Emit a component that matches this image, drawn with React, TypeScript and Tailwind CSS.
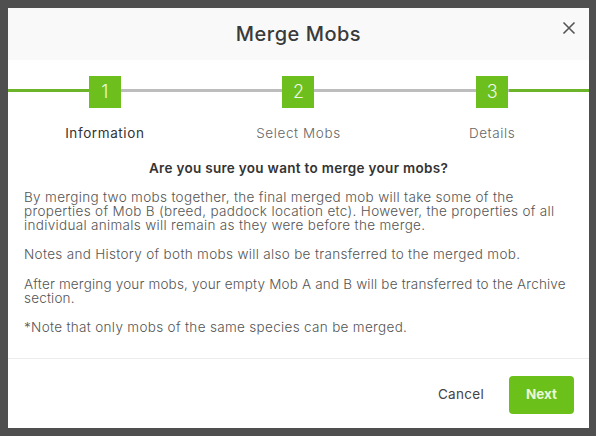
import React from "react";

const font = { fontFamily: "Inter, 'Noto Sans', sans-serif" };

function Step({ n, label, active }: { n: number; label: string; active?: boolean }) {
  return (
    <div className="flex flex-col items-center">
      <div className="w-[32px] h-[32px] bg-[#6cbf1c] flex items-center justify-center text-[18px] font-light text-[#eef8e4] leading-none">
        {n}
      </div>
      <div
        className={
          "mt-[15px] text-[13.5px] leading-[20px] tracking-[0.6px] " +
          (active ? "text-[#333] font-normal" : "text-[#666] font-light")
        }
      >
        {label}
      </div>
    </div>
  );
}

export default function App() {
  return (
    <div className="w-[596px] h-[436px] bg-[#4f4f4f] p-[8px] pr-[7px]" style={font}>
      <div className="w-[581px] h-[420px] bg-white flex flex-col">
        <div className="h-[52px] bg-[#f9f9f9] relative flex items-center justify-center">
          <div className="text-[20px] font-medium text-[#3a3a3a] tracking-[0.5px]">Merge Mobs</div>
          <button className="absolute right-[12px] top-[12px] w-[16px] h-[16px] flex items-center justify-center text-[#555]">
            <svg width="14" height="14" viewBox="0 0 14 14" fill="none" stroke="currentColor" strokeWidth="1.6">
              <path d="M1.5 1.5 L12.5 12.5 M12.5 1.5 L1.5 12.5" />
            </svg>
          </button>
        </div>
        <div className="relative mt-[16px]">
          <div className="absolute left-0 right-0 top-[13px] h-[3px] flex">
            <div className="w-[81px] bg-[#6cb52b]" />
            <div className="flex-1 bg-[#bdbdbd]" />
            <div className="w-[80px] bg-[#6cb52b]" />
          </div>
          <div className="relative grid grid-cols-3">
            <Step n={1} label="Information" active />
            <Step n={2} label="Select Mobs" />
            <Step n={3} label="Details" />
          </div>
        </div>
        <div className="px-[16px] text-[#555] font-light text-[13.5px] leading-[14px] tracking-[0.32px]">
          <div className="mt-[16px] text-center font-semibold text-[#333] text-[13.5px] leading-[18px] tracking-[0.3px]">
            Are you sure you want to merge your mobs?
          </div>
          <p className="mt-[13px]">
            By merging two mobs together, the final merged mob will take some of the properties of Mob B
            (breed, paddock location etc). However, the properties of all individual animals will remain as
            they were before the merge.
          </p>
          <p className="mt-[15px]">Notes and History of both mobs will also be transferred to the merged mob.</p>
          <p className="mt-[16px] tracking-[0.18px]">
            After merging your mobs, your empty Mob A and B will be transferred to the Archive section.
          </p>
          <p className="mt-[15px]">*Note that only mobs of the same species can be merged.</p>
        </div>
        <div className="mt-auto border-t border-[#ececec] h-[70px] flex items-center justify-end pr-[15px] pt-[2px] gap-[25px]">
          <button className="text-[13.5px] text-[#444] font-normal tracking-[0.3px]">Cancel</button>
          <button className="w-[65px] h-[38px] rounded-[4px] bg-[#6cc01a] text-[#e9f7da] font-bold text-[13.5px]">
            Next
          </button>
        </div>
      </div>
    </div>
  );
}
